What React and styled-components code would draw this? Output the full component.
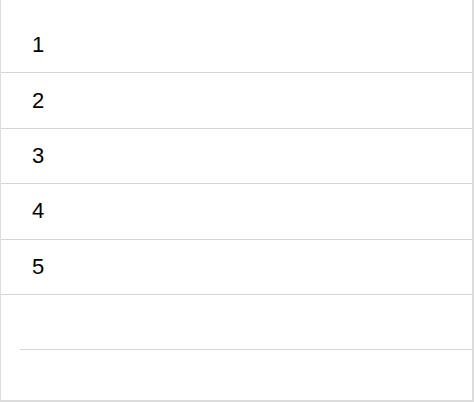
import styled, { createGlobalStyle } from "styled-components";

const GlobalStyle = createGlobalStyle`
  html, body {
    margin: 0;
    padding: 0;
    background: #fff;
  }
  body {
    font-family: "Liberation Sans", Arial, sans-serif;
  }
`;

const Frame = styled.div`
  width: 474px;
  height: 402px;
  box-sizing: border-box;
  border-left: 1px solid #dcdcdc;
  border-right: 2px solid #dcdcdc;
  border-bottom: 2px solid #dcdcdc;
  padding-top: 18px;
  display: flex;
  flex-direction: column;
  overflow: hidden;
`;

const List = styled.ul`
  list-style: none;
  margin: 0;
  padding: 0;
  display: flex;
  flex-direction: column;
`;

const Row = styled.li`
  flex: none;
  height: 55.4px;
  box-sizing: border-box;
  display: flex;
  align-items: center;
  padding-left: ${(p) => (p.$inset ? "12px" : "31px")};
  margin-left: ${(p) => (p.$inset ? "19px" : "0")};
  font-size: 22px;
  color: #000;
  border-bottom: ${(p) => (p.$last ? "none" : "1px solid #d6d6d6")};
`;

const items = ["1", "2", "3", "4", "5", "", ""];

export default function App() {
  return (
    <>
      <GlobalStyle />
      <Frame>
        <List>
          {items.map((label, i) => (
            <Row key={i} $inset={i === 5} $last={i === items.length - 1}>
              {label}
            </Row>
          ))}
        </List>
      </Frame>
    </>
  );
}
